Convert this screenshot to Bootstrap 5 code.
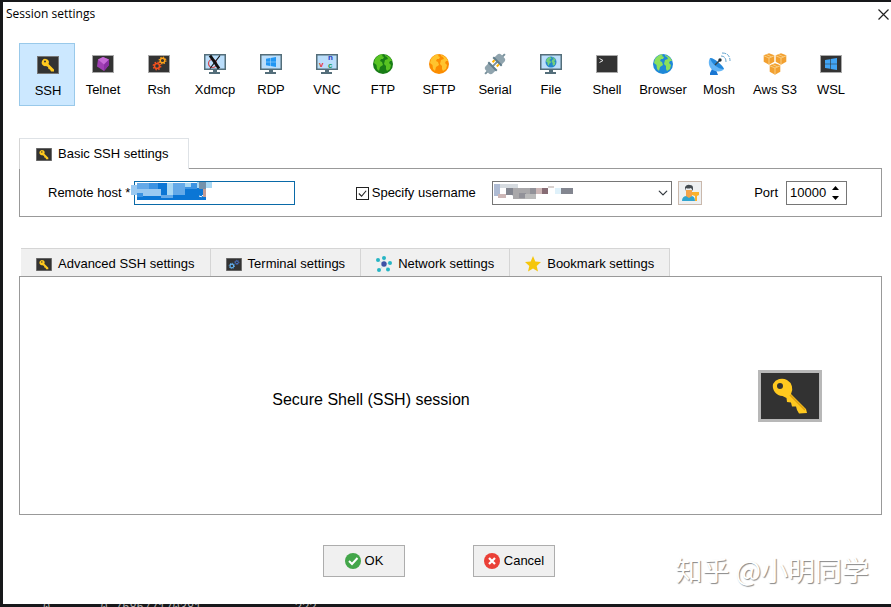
<!DOCTYPE html>
<html lang="en">
<head>
<meta charset="utf-8">
<meta name="viewport" content="width=device-width, initial-scale=1">
<title>Session settings</title>
<link href="https://cdn.jsdelivr.net/npm/bootstrap@5.3.0/dist/css/bootstrap.min.css" rel="stylesheet">
<style>
body{background:#17181a;color:#000;font:13px/20px "Liberation Sans",Arial,sans-serif}
svg{display:block;flex:none}
.console{height:2px;overflow:hidden;white-space:pre;color:#aaa;font:12px/14px "Liberation Mono",monospace;padding-left:43px}
.console.above{display:flex;align-items:flex-end}
.console.below{height:3px;line-height:8px}
.dialog-box{background:#fff;margin-left:3px;position:relative}
.titlebar{font:12px/24px "Open Sans","Noto Sans",sans-serif;padding:0 2px 0 3px;height:24px}
.plain{background:none;border:0;padding:0}
.types{padding:17px 16px 0}
.kind{flex:0 1 56px;height:63px;background:#fff;border:1px solid transparent;padding:8px 0 5px;color:#000;white-space:nowrap}
.kind svg{margin:0 auto 4px}
.kind span{display:flex;justify-content:center}
.kind.active{background:#cce8ff;border-color:#99c9ea;padding:9px 0 4px 2px}
.pane{border:1px solid #999;margin:0 9px 0 16px}
.tabs{margin-left:16px;border:0}
.tabs .nav-link{display:flex;align-items:center;gap:6px;color:#000;border:0;border-right:1px solid #d5d5d5;border-top:1px solid #d5d5d5;border-radius:0;background:#f0f0f0;padding:5px 15px 2px 15px;margin:0;line-height:20px}
.basic{margin-top:32px}
.basic .nav-link.active{background:#fff;color:#000;border-left:1px solid #d5d5d5;padding:5px 19px 5px 16px;margin-bottom:-1px;position:relative}
.more{margin-top:31px;padding-left:2px}
.fields{padding:12px 34px 11px 28px}
.field{height:24px;border:1px solid #767676;border-radius:0;font-size:13px;color:#000;padding:0 4px;background-color:#fff}
.host{width:161px;border-color:#0a6aa8}
.user{width:180px;background-position:right 3px center;background-size:10px 10px}
.mosaic{position:absolute;pointer-events:none}
.host-mask{left:-3px;top:0}
.user-mask{left:2px;top:2px}
.tick{width:13px;height:13px;border:1px solid #222;border-radius:0!important;margin:0 3px 0 0}
.tick:checked{background-color:#fff;border-color:#222;background-image:url("data:image/svg+xml,%3Csvg xmlns='http://www.w3.org/2000/svg' viewBox='0 0 12 12'%3E%3Cpath d='M2 6l3 3 5-6' fill='none' stroke='%23222' stroke-width='1.2'/%3E%3C/svg%3E")}
.manage{width:24px;height:24px;background:#eef0f2;border:1px solid #c9b8ac;padding:2px;margin-left:6px}
.spin{width:61px;padding:0 6px 0 3px}
.spin input{width:40px;border:0;padding:0;font-size:13px;outline:0;color:#000}
.arrows{gap:6px}
.intro{height:239px}
.intro h1{font-size:16px;line-height:20px;font-weight:400}
.badge-key{margin:0 59px 0 36px}
.actions{padding:30px 16px 27px 0;gap:68px}
.act{width:82px;height:32px;border:1px solid #adadad;background:#f0f0f0;border-radius:0;color:#000;padding:0;font-size:13px;display:flex;align-items:center;justify-content:center;gap:4px}
.author{position:absolute;right:22px;bottom:16px;font:27px/36px "Noto Sans CJK SC",sans-serif;color:#fff;text-shadow:1px 1px 1px #888}
</style>
</head>
<body>
<svg width="0" height="0" class="position-absolute" aria-hidden="true">
 <defs>
  <symbol id="box" viewBox="0 0 24 24"><path fill="#aaa" d="M1 3h22v18H1z"/><path fill="#333" d="M2 4h20v16H2z"/></symbol>
  <symbol id="keybox" viewBox="0 0 64 52"><path fill="#b8b8b8" d="M0 0h64v52H0z"/><path fill="#323232" d="M3 3h58v46H3z"/><path fill="#ffc91f" fill-rule="evenodd" d="M15 14a10 10 0 1 1 18 10l15 15 1 4-8 .5-2-3.500-1-3.500-4 0-1-4-4-.5-.5-4-4-2A10 10 0 0 1 15 14zm7-1a3 3 0 1 0 0 6 3 3 0 0 0 0-6z"/><path d="M32 25l15 15" stroke="#dea010" stroke-width="1.500"/></symbol>
  <symbol id="keysm" viewBox="0 0 22 18"><path fill="#777" d="M0 0h22v18H0z"/><path fill="#333" d="M1 1h20v16H1z"/><path fill="#ffc91f" fill-rule="evenodd" d="M5 5a3.500 3.500 0 1 1 6.500 3l5.500 5.500v2h-3l-1-2-1.500-.5-.5-2-2-1A3.500 3.500 0 0 1 5 5zm3-.5a1 1 0 1 0 0 2 1 1 0 0 0 0-2z"/></symbol>
  <symbol id="monitor" viewBox="0 0 24 24"><path fill="#546e7a" d="M1 2h22v16H1zM10 18h4v2h3v2H6v-2h4z"/><path fill="#bbdefb" d="M2.500 3.500h19v13h-19z"/></symbol>
  <symbol id="cog" viewBox="-6 -6 12 12"><circle r="3" fill="none" stroke="currentColor" stroke-width="1.800"/><circle r="4.500" fill="none" stroke="currentColor" stroke-width="1.600" stroke-dasharray="1.770 1.770"/></symbol>
  <symbol id="win" viewBox="0 0 12 12"><path fill="currentColor" d="M0 2l5-.8v4.500H0zM5.600 1.100L12 0v5.700H5.600zM0 6.300h5v4.500L0 10zM5.600 6.300H12V12l-6.400-1.100z"/></symbol>
  <symbol id="land" viewBox="0 0 20 20"><path fill="currentColor" d="M2 5C4 2 7 0 10 .5L9 2l2 1-1 2-2 0-1 2 2 1 1 3-3 2-1 4-2-2-.5-4L1 9zM12 1c3 .5 6 3 7 6l-2 0-1 2 2 2-1 4-3 2-1-2 0-3-2-2 1-4 3-1-1-2-2-1z"/></symbol>
  <symbol id="cube" viewBox="0 0 12 12"><path fill="#f2a030" d="M6 .3l5.300 2v6.500L6 11.700.7 8.800V2.300z"/><path d="M1 2.800L6 5l5-2.200M6 5v6.300M3.500 1.500l5 2.300" fill="none" stroke="#fbd896" stroke-width=".8"/></symbol>
 </defs>
</svg>

<div class="console above" aria-hidden="true">  0       0 0.0.0.0:58398            0.0.0.0:*</div>
<main class="dialog-box">
 <header class="titlebar d-flex align-items-center justify-content-between">
  <span>Session settings</span>
  <button class="plain" type="button" aria-label="Close"><svg width="11" height="11" viewBox="0 0 11 11"><path d="M.5.5l10 10m0-10l-10 10" stroke="#222" stroke-width="1.200"/></svg></button>
 </header>

 <nav class="types d-flex" aria-label="Session type">
  <button type="button" class="kind active"><svg width="24" height="24" viewBox="0 0 24 24"><use href="#keysm" x="1" y="3" width="22" height="18"/></svg><span>SSH</span></button>
  <button type="button" class="kind"><svg width="24" height="24" viewBox="0 0 24 24"><use href="#box"/><path fill="#a03fb4" d="M12 5l6 2.500v5.500l-5 6-7-4.500 1-7z"/><path fill="#c66ad6" d="M12 5l6 2.500-5 5-6-5z"/><path fill="#8a30a2" d="M18 7.500v5.500l-5 6v-6.500z"/></svg><span>Telnet</span></button>
  <button type="button" class="kind"><svg width="24" height="24" viewBox="0 0 24 24"><use href="#box"/><use href="#cog" x="11" y="4" width="9" height="9" color="#ffa31a"/><use href="#cog" x="5" y="9" width="10" height="10" color="#f4511e"/></svg><span>Rsh</span></button>
  <button type="button" class="kind"><svg width="24" height="24" viewBox="0 0 24 24"><use href="#monitor"/><circle cx="9.500" cy="11.500" r="4" fill="none" stroke="#d2484f" stroke-width="1.200"/><path d="M7 3.500l9 13" stroke="#111" stroke-width="3"/><path d="M17 3.500l-10 13" stroke="#111" stroke-width="1.200"/></svg><span>Xdmcp</span></button>
  <button type="button" class="kind"><svg width="24" height="24" viewBox="0 0 24 24"><use href="#monitor"/><use href="#win" x="7" y="5" width="10" height="10" color="#2196f3"/></svg><span>RDP</span></button>
  <button type="button" class="kind"><svg width="24" height="24" viewBox="0 0 24 24" font-family="Liberation Sans,sans-serif" font-weight="700" font-size="8"><use href="#monitor"/><text x="4" y="15" fill="#e53935">v</text><text x="13" y="16" fill="#169c59">c</text><text x="13" y="8" fill="#2338bd">n</text></svg><span>VNC</span></button>
  <button type="button" class="kind"><svg width="24" height="24" viewBox="0 0 24 24"><circle cx="12" cy="12" r="10" fill="#187d16"/><use href="#land" x="2" y="2" width="20" height="20" color="#58c322"/></svg><span>FTP</span></button>
  <button type="button" class="kind"><svg width="24" height="24" viewBox="0 0 24 24"><circle cx="12" cy="12" r="10" fill="#fb8c00"/><use href="#land" x="2" y="2" width="20" height="20" color="#ffc42e"/></svg><span>SFTP</span></button>
  <button type="button" class="kind"><svg width="24" height="24" viewBox="0 0 24 24"><g transform="rotate(45 12 12)"><path d="M12-2v28" stroke="#78909c" stroke-width="2"/><path fill="#90a4ae" d="M7 9V4q0-3 3-3h4q3 0 3 3v5zM7 15v5q0 3 3 3h4q3 0 3-3v-5z"/><path fill="#607d8b" d="M6 7.500h12v2H6zM6 14.500h12v2H6z"/><path d="M9 9.500v3m6-3v3" stroke="#ffb300" stroke-width="2"/></g></svg><span>Serial</span></button>
  <button type="button" class="kind"><svg width="24" height="24" viewBox="0 0 24 24"><use href="#monitor"/><circle cx="12" cy="10" r="5.500" fill="#2387cc"/><use href="#land" x="6.500" y="4.500" width="11" height="11" color="#72cf7c"/></svg><span>File</span></button>
  <button type="button" class="kind"><svg width="24" height="24" viewBox="0 0 24 24"><use href="#box"/><path d="M4.500 6.500L8 8.500l-3.500 2" fill="none" stroke="#eee"/></svg><span>Shell</span></button>
  <button type="button" class="kind"><svg width="24" height="24" viewBox="0 0 24 24"><circle cx="12" cy="12" r="10" fill="#1e88d8"/><use href="#land" x="2" y="2" width="20" height="20" color="#8be05c"/></svg><span>Browser</span></button>
  <button type="button" class="kind"><svg width="24" height="24" viewBox="0 0 24 24"><path fill="#1976d2" d="M5 17l4 1 2 5H3v-2z"/><path fill="#64b5f6" d="M3 6C0 11 3 18 8 19c4 1 8 0 9-2z"/><path fill="#2288dc" d="M3 6c3-1 13 7 14 11-4 1-13-5-14-11z"/><path d="M8 13l5-5" stroke="#37474f" stroke-width="1.500"/><circle cx="13" cy="8" r="1.700" fill="#263238"/><path d="M14 4q5 0 5 6M15 1q8 0 8 8" fill="none" stroke="#64a5d0" stroke-dasharray="4 1"/></svg><span>Mosh</span></button>
  <button type="button" class="kind"><svg width="24" height="24" viewBox="0 0 24 24"><use href="#cube" x="0" y="1" width="12" height="12"/><use href="#cube" x="12" y="1" width="12" height="12"/><use href="#cube" x="6" y="11" width="12" height="12"/></svg><span>Aws S3</span></button>
  <button type="button" class="kind"><svg width="24" height="24" viewBox="0 0 24 24"><use href="#box"/><use href="#win" x="6" y="6" width="12" height="12" color="#42a5f5"/></svg><span>WSL</span></button>
 </nav>

 <ul class="nav nav-tabs tabs basic">
  <li class="nav-item"><a class="nav-link active" href="#basic" aria-current="page"><svg width="16" height="13" viewBox="0 0 22 18"><use href="#keysm" width="22" height="18"/></svg>Basic SSH settings</a></li>
 </ul>
 <form id="basic" class="pane fields d-flex align-items-center justify-content-between">
  <div class="d-flex align-items-center gap-1">
   <label for="host">Remote host *</label>
   <div class="position-relative">
    <input id="host" class="form-control field host" type="text">
    <svg class="mosaic host-mask" width="81" height="20" viewBox="0 0 81 20" aria-hidden="true"><path fill="#0b76d5" d="M6 2h69v17H6z"/><path fill="#9ac9f1" d="M0 4h12v10H0zM12 8h18v7H12z"/><path fill="#64a9e8" d="M6 2h12v6H6zM42 2h12v12H42zM30 14h12v3H30z"/><path fill="#3c93e2" d="M18 2h9v6h-9zM54 2h12v6H54zM6 12h6v4H6z"/><path fill="#a9d8f4" d="M36 2h6v12h-6zM54 2h6v4h-6zM66 1h15v6H66z"/><path fill="#7592ab" d="M68 1h7v7h-7z"/><path fill="#c49b93" d="M72 8h3v8h-3z"/><path d="M68 15q3 2 4-1" fill="none" stroke="#fff"/></svg>
   </div>
  </div>
  <div class="d-flex align-items-center ms-2">
   <input id="specify" class="form-check-input tick" type="checkbox" checked>
   <label for="specify">Specify username</label>
   <div class="position-relative ms-3">
    <select class="form-select field user" aria-label="Username"><option></option></select>
    <svg class="mosaic user-mask" width="80" height="16" viewBox="0 0 80 16" aria-hidden="true"><path fill="#aebbd3" d="M0 1h6v12H0z"/><path fill="#d6dbe0" d="M6 1h18v4H6zM18 5h7v8h-7z"/><path fill="#cdb7b7" d="M4 11h8v4H4zM42 5h12v6H42z"/><path fill="#838690" d="M12 5h7v7h-7zM67 5h12v6H67z"/><path fill="#a9a8aa" d="M19 5h12v11H19zM30 5h12v6H30z"/><path fill="#929299" d="M25 10h7v5h-7zM36 5h6v6h-6z"/><path fill="#bbb" d="M31 11h11v5H31z"/><path fill="#876c74" d="M48 5h6v6h-6z"/><path fill="#dff1fa" d="M61 5h6v6h-6z"/><path fill="#d8d1cf" d="M54 3h6v2h-6z"/></svg>
   </div>
   <button class="manage" type="button" aria-label="Manage users"><svg width="18" height="18" viewBox="0 0 18 18"><path fill="#32a5cf" d="M1 17q0-5 5-5h4q4 0 4 5z"/><path fill="#f4a34a" d="M5 6h6v6l-3 2-3-2z"/><path fill="#434a50" d="M4 7V3q2-3 5-2 3 0 3 3v3l-2-3q-3 1-5 0z"/><path fill="#fbb12b" d="M11 8h7v3l-2 1v5h-2v-5l-3-1z"/></svg></button>
  </div>
  <div class="d-flex align-items-center gap-2">
   <label for="port">Port</label>
   <div class="field spin d-flex align-items-center justify-content-between">
    <input id="port" type="text" inputmode="numeric" value="10000">
    <div class="arrows d-flex flex-column">
     <button class="plain" type="button" aria-label="Increase port"><svg width="9" height="5" viewBox="0 0 9 5"><path d="M1 5l3.500-4L8 5z"/></svg></button>
     <button class="plain" type="button" aria-label="Decrease port"><svg width="9" height="5" viewBox="0 0 9 5"><path d="M1 0l3.500 4L8 0z"/></svg></button>
    </div>
   </div>
  </div>
 </form>

 <ul class="nav nav-tabs tabs more">
  <li class="nav-item"><a class="nav-link" href="#details"><svg width="16" height="13" viewBox="0 0 22 18"><use href="#keysm" width="22" height="18"/></svg>Advanced SSH settings</a></li>
  <li class="nav-item"><a class="nav-link" href="#details"><svg width="16" height="13" viewBox="0 0 22 18"><path fill="#777" d="M0 0h22v18H0z"/><path fill="#333" d="M1 1h20v16H1z"/><use href="#cog" x="3" y="6" width="10" height="10" color="#64b5f6"/><use href="#cog" x="11" y="2" width="8" height="8" color="#4b7de0"/></svg>Terminal settings</a></li>
  <li class="nav-item"><a class="nav-link" href="#details"><svg width="16" height="16" viewBox="0 0 16 16"><path d="M2 4l6 4 6-1M8 2v6l-4 6m4-6l4 5" stroke="#b7dfe5" fill="none" stroke-width=".7"/><circle cx="8" cy="8" r="2.700" fill="#3f51a5"/><g fill="#26b5c4"><circle cx="2" cy="4" r="2"/><circle cx="8" cy="2" r="2"/><circle cx="14" cy="7" r="2"/><circle cx="3" cy="14" r="2"/><circle cx="12" cy="13.500" r="2"/></g></svg>Network settings</a></li>
  <li class="nav-item"><a class="nav-link" href="#details"><svg width="16" height="16" viewBox="0 0 16 16"><path fill="#f5c60c" d="M8 0l2.300 5.400 5.700.6-4.300 3.900L13 15.500 8 12.500l-5 3 1.300-5.600L0 6l5.700-.6z"/></svg>Bookmark settings</a></li>
 </ul>
 <section id="details" class="pane intro d-flex align-items-center">
  <h1 class="flex-grow-1 text-center mb-0 mt-2">Secure Shell (SSH) session</h1>
  <svg class="badge-key" width="64" height="52" role="img" aria-label="Key"><use href="#keybox"/></svg>
 </section>

 <footer class="actions d-flex justify-content-center">
  <button type="button" class="btn act"><svg width="16" height="16" viewBox="0 0 16 16"><circle cx="8" cy="8" r="8" fill="#43a64a"/><path d="M4 8l3 3 5.500-6" fill="none" stroke="#fff" stroke-width="2"/></svg>OK</button>
  <button type="button" class="btn act"><svg width="16" height="16" viewBox="0 0 16 16"><circle cx="8" cy="8" r="8" fill="#ea4037"/><path d="M5 5l6 6m0-6l-6 6" stroke="#fff" stroke-width="2.200"/></svg>Cancel</button>
 </footer>
 <div class="author" lang="zh">知乎 @小明同学</div>
</main>
<div class="console below" aria-hidden="true">0       0 768677170381             ???</div>
<script src="https://cdn.jsdelivr.net/npm/bootstrap@5.3.0/dist/js/bootstrap.bundle.min.js"></script>
</body>
</html>
